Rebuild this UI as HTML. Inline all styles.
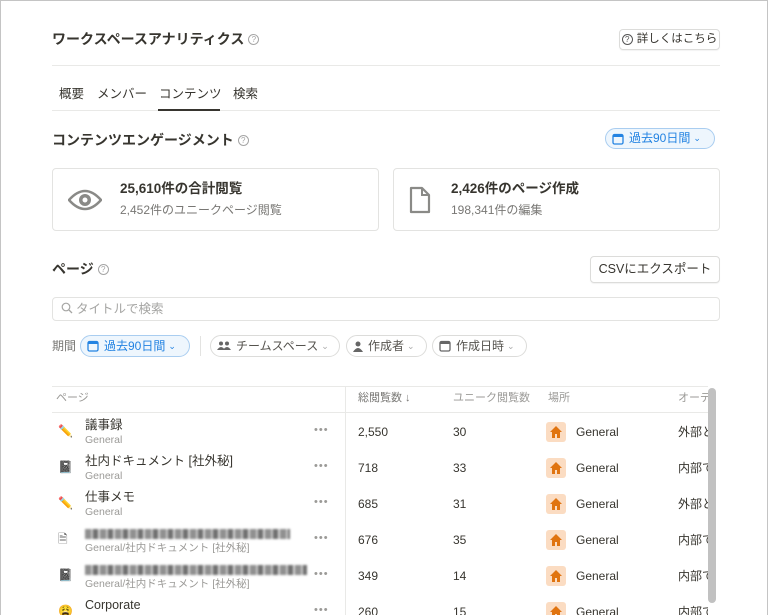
<!DOCTYPE html>
<html><head><meta charset="utf-8"><style>
*{box-sizing:border-box;margin:0;padding:0}
html,body{width:768px;height:615px;overflow:hidden}
body{background:#fff;font-family:"Liberation Sans","Noto Sans CJK JP",sans-serif;color:#37352f;position:relative;line-height:1.2}
.frame{position:absolute;left:0;top:0;width:768px;height:615px;border:1px solid #c4c4c4;border-bottom:none}
.a{position:absolute;white-space:nowrap}
.q{display:inline-block;width:11px;height:11px;border:1px solid #a5a5a5;border-radius:50%;font-size:8px;line-height:9px;text-align:center;color:#a5a5a5;vertical-align:2px;font-weight:normal;margin-left:4px}
.hr{position:absolute;left:52px;width:668px;height:1px;background:#e9e9e7}
.btn{position:absolute;border:1px solid #dcdcda;border-radius:4px;font-size:12px;display:flex;align-items:center;justify-content:center;box-shadow:0 1px 1px rgba(0,0,0,.05)}
.card{position:absolute;top:168px;height:63px;border:1px solid #e3e3e1;border-radius:4px}
.pill{position:absolute;top:335px;height:22px;border:1px solid #dcdcda;border-radius:11px;font-size:12px;color:#787774;display:flex;align-items:center;padding:0 6px}
.blue{border-color:#a9cdf0;background:#eef6fd;color:#2383e2}
.clip{position:absolute;left:0;top:0;width:768px;height:615px;overflow:hidden}
.row{position:absolute;left:52px;width:656px;height:36px;font-size:12px}
.row .t{position:absolute;left:33px;top:4px;font-size:12.5px;color:#37352f;line-height:15px}
.row .s{position:absolute;left:33px;top:20px;font-size:10.5px;color:#9b9a97;line-height:13px}
.row .ic{position:absolute;left:6px;top:10px;font-size:12px;line-height:14px}
.row .dots{position:absolute;left:262px;top:10px;color:#9b9a97;font-size:11px;letter-spacing:1px}
.row .c1{position:absolute;left:306px;top:11px;line-height:14px}
.row .c2{position:absolute;left:401px;top:11px;line-height:14px}
.row .h{position:absolute;left:494px;top:8px;width:20px;height:20px;border-radius:3px;background:#fbdcc2}
.row .c3{position:absolute;left:524px;top:11px;line-height:14px}
.row .c4{position:absolute;left:626px;top:11px;line-height:14px;width:30px;overflow:hidden;white-space:nowrap}
.blur{display:inline-block;height:10px;background:repeating-linear-gradient(90deg,#8f8f8f 0 6px,#c9c9c9 6px 8px,#707070 8px 13px,#d8d8d8 13px 15px);filter:blur(1px);vertical-align:middle}
</style></head><body><div class="clip">
<div class="a" style="left:52px;top:31px;font-size:14px;font-weight:bold">ワークスペースアナリティクス<span class="q">?</span></div>
<div class="btn" style="left:619px;top:29px;width:101px;height:21px;font-size:11.5px"><span class="q" style="border-color:#555;color:#555;margin:0 4px 0 0;vertical-align:0">?</span>詳しくはこちら</div>
<div class="hr" style="top:65px"></div>
<div class="a" style="left:59px;top:87px;font-size:12.5px">概要</div>
<div class="a" style="left:97px;top:87px;font-size:12.5px">メンバー</div>
<div class="a" style="left:159px;top:87px;font-size:12.5px">コンテンツ</div>
<div class="a" style="left:233px;top:87px;font-size:12.5px">検索</div>
<div class="hr" style="top:110px"></div>
<div class="a" style="left:158px;top:109px;width:62px;height:2px;background:#37352f"></div>
<div class="a" style="left:52px;top:132px;font-size:14px;font-weight:bold">コンテンツエンゲージメント<span class="q">?</span></div>
<div class="pill blue" style="left:605px;top:128px;height:21px;width:110px;font-size:12px">
<svg width="12" height="12" viewBox="0 0 12 12" style="margin-right:5px"><rect x="1" y="1.5" width="10" height="9.5" rx="1.5" fill="none" stroke="#2383e2" stroke-width="1.3"/><rect x="1" y="1.5" width="10" height="2.5" fill="#2383e2"/></svg>過去90日間 <span style="font-size:9px;margin-left:3px">⌄</span></div>
<div class="card" style="left:52px;width:327px">
<svg class="a" style="left:15px;top:19px" width="34" height="24" viewBox="0 0 34 24"><path d="M1 12 Q17 -6 33 12 Q17 30 1 12Z" fill="none" stroke="#8a8a87" stroke-width="2.5"/><circle cx="17" cy="12" r="6" fill="#8a8a87"/><circle cx="17" cy="12" r="2.5" fill="#fff"/></svg>
<div class="a" style="left:67px;top:12px;font-size:13.5px;font-weight:bold">25,610件の合計閲覧</div>
<div class="a" style="left:67px;top:34px;font-size:12px;color:#787774">2,452件のユニークページ閲覧</div>
</div>
<div class="card" style="left:393px;width:327px">
<svg class="a" style="left:15px;top:17px" width="22" height="28" viewBox="0 0 22 28"><path d="M2 2 H13 L20 9 V26 H2Z" fill="none" stroke="#8a8a87" stroke-width="2.2" stroke-linejoin="round"/><path d="M13 2 V9 H20" fill="none" stroke="#8a8a87" stroke-width="2"/></svg>
<div class="a" style="left:57px;top:12px;font-size:13.5px;font-weight:bold">2,426件のページ作成</div>
<div class="a" style="left:57px;top:34px;font-size:12px;color:#787774">198,341件の編集</div>
</div>
<div class="a" style="left:52px;top:261px;font-size:14px;font-weight:bold">ページ<span class="q">?</span></div>
<div class="btn" style="left:590px;top:256px;width:130px;height:27px;font-size:12.5px">CSVにエクスポート</div>
<div class="a" style="left:52px;top:297px;width:668px;height:24px;border:1px solid #e3e3e1;border-radius:4px;font-size:12.5px;color:#a5a5a3;padding:4px 0 0 8px">
<svg width="12" height="12" viewBox="0 0 12 12" style="vertical-align:-1px;margin-right:3px"><circle cx="5" cy="5" r="3.8" fill="none" stroke="#a5a5a3" stroke-width="1.2"/><path d="M8 8 L11 11" stroke="#a5a5a3" stroke-width="1.3"/></svg>タイトルで検索</div>
<div class="a" style="left:52px;top:339px;font-size:12px;color:#787774">期間</div>
<div class="pill blue" style="left:80px;width:110px">
<svg width="12" height="12" viewBox="0 0 12 12" style="margin-right:5px"><rect x="1" y="1.5" width="10" height="9.5" rx="1.5" fill="none" stroke="#2383e2" stroke-width="1.3"/><rect x="1" y="1.5" width="10" height="2.5" fill="#2383e2"/></svg>過去90日間 <span style="font-size:9px;margin-left:3px">⌄</span></div>
<div class="a" style="left:200px;top:336px;width:1px;height:20px;background:#e3e3e1"></div>
<div class="pill" style="left:210px;width:130px;color:#55534e">
<svg width="14" height="10" viewBox="0 0 14 10" style="margin-right:5px"><circle cx="4" cy="2.5" r="2" fill="#666"/><circle cx="10" cy="2.5" r="2" fill="#666"/><path d="M0 9 Q4 3 8 9Z M6 9 Q10 3 14 9Z" fill="#666"/></svg>チームスペース <span style="font-size:9px;margin-left:3px;color:#aaa">⌄</span></div>
<div class="pill" style="left:346px;width:81px;color:#55534e">
<svg width="10" height="11" viewBox="0 0 10 11" style="margin-right:5px"><circle cx="5" cy="3" r="2.5" fill="#666"/><path d="M0 11 Q5 3 10 11Z" fill="#666"/></svg>作成者 <span style="font-size:9px;margin-left:3px;color:#aaa">⌄</span></div>
<div class="pill" style="left:432px;width:95px;color:#55534e">
<svg width="12" height="12" viewBox="0 0 12 12" style="margin-right:5px"><rect x="1" y="1.5" width="10" height="9.5" rx="1.5" fill="none" stroke="#666" stroke-width="1.3"/><rect x="1" y="1.5" width="10" height="2.5" fill="#666"/></svg>作成日時 <span style="font-size:9px;margin-left:3px;color:#aaa">⌄</span></div>
<div class="hr" style="top:386px;width:656px"></div>
<div class="hr" style="top:412px;width:656px"></div>
<div class="a" style="left:345px;top:386px;width:1px;height:229px;background:#e9e9e7"></div>
<div class="a" style="left:56px;top:392px;font-size:11px;color:#9b9a97">ページ</div>
<div class="a" style="left:358px;top:392px;font-size:11px;color:#787774">総閲覧数 ↓</div>
<div class="a" style="left:453px;top:392px;font-size:11px;color:#9b9a97">ユニーク閲覧数</div>
<div class="a" style="left:548px;top:392px;font-size:11px;color:#9b9a97">場所</div>
<div class="a" style="left:678px;top:392px;font-size:11px;color:#9b9a97;width:30px;overflow:hidden">オーデ</div>

<div class="row" style="top:414px"><span class="ic">✏️</span><span class="t">議事録</span><span class="s">General</span><span class="dots">•••</span><span class="c1">2,550</span><span class="c2">30</span><span class="h"><svg width="20" height="20" viewBox="0 0 20 20"><path d="M4 10 L10 4 L16 10 H14 V16 H11 V12 H9 V16 H6 V10Z" fill="#e07410"/></svg></span><span class="c3">General</span><span class="c4">外部と</span></div>
<div class="row" style="top:450px"><span class="ic">📓</span><span class="t">社内ドキュメント [社外秘]</span><span class="s">General</span><span class="dots">•••</span><span class="c1">718</span><span class="c2">33</span><span class="h"><svg width="20" height="20" viewBox="0 0 20 20"><path d="M4 10 L10 4 L16 10 H14 V16 H11 V12 H9 V16 H6 V10Z" fill="#e07410"/></svg></span><span class="c3">General</span><span class="c4">内部で</span></div>
<div class="row" style="top:486px"><span class="ic">✏️</span><span class="t">仕事メモ</span><span class="s">General</span><span class="dots">•••</span><span class="c1">685</span><span class="c2">31</span><span class="h"><svg width="20" height="20" viewBox="0 0 20 20"><path d="M4 10 L10 4 L16 10 H14 V16 H11 V12 H9 V16 H6 V10Z" fill="#e07410"/></svg></span><span class="c3">General</span><span class="c4">外部と</span></div>
<div class="row" style="top:522px"><span class="ic" style="color:#666">🗎</span><span class="t"><span class="blur" style="width:205px"></span></span><span class="s">General/社内ドキュメント [社外秘]</span><span class="dots">•••</span><span class="c1">676</span><span class="c2">35</span><span class="h"><svg width="20" height="20" viewBox="0 0 20 20"><path d="M4 10 L10 4 L16 10 H14 V16 H11 V12 H9 V16 H6 V10Z" fill="#e07410"/></svg></span><span class="c3">General</span><span class="c4">内部で</span></div>
<div class="row" style="top:558px"><span class="ic">📓</span><span class="t"><span class="blur" style="width:222px"></span></span><span class="s">General/社内ドキュメント [社外秘]</span><span class="dots">•••</span><span class="c1">349</span><span class="c2">14</span><span class="h"><svg width="20" height="20" viewBox="0 0 20 20"><path d="M4 10 L10 4 L16 10 H14 V16 H11 V12 H9 V16 H6 V10Z" fill="#e07410"/></svg></span><span class="c3">General</span><span class="c4">内部で</span></div>
<div class="row" style="top:594px"><span class="ic">😩</span><span class="t">Corporate</span><span class="dots">•••</span><span class="c1">260</span><span class="c2">15</span><span class="h"><svg width="20" height="20" viewBox="0 0 20 20"><path d="M4 10 L10 4 L16 10 H14 V16 H11 V12 H9 V16 H6 V10Z" fill="#e07410"/></svg></span><span class="c3">General</span><span class="c4">内部で</span></div>
<div class="a" style="left:708px;top:388px;width:8px;height:215px;border-radius:4px;background:#c1c1c1"></div>
<div class="frame"></div>
</div></body></html>
